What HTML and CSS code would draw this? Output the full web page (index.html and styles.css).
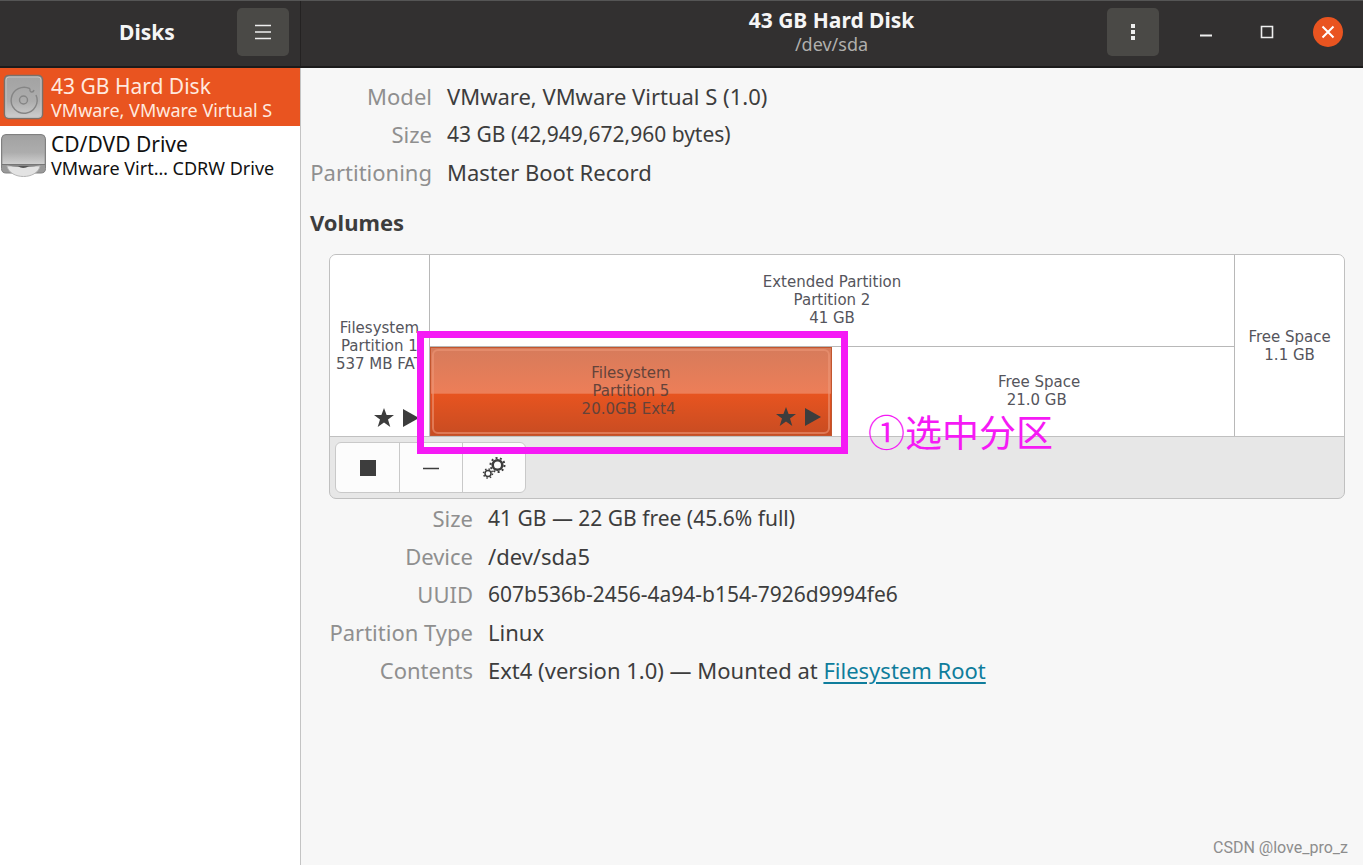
FILE: index.html
```html
<!DOCTYPE html>
<html lang="en">
<head>
<meta charset="utf-8">
<title>Disks</title>
<link rel="stylesheet" href="styles.css">
</head>
<body>
<svg class="defs" aria-hidden="true">
  <symbol id="star" viewBox="0 0 22 22"><path d="M11 1l2.6 7H21l-6 4.600 2.300 7.400-6.300-4.400L4.700 20 7 12.600 1 8h7.400z"/></symbol>
  <symbol id="play" viewBox="0 0 18 20"><path d="M1 1v18L17 10z"/></symbol>
</svg>
<div class="window">
  <header class="titlebar">
    <div class="side-head">
      <h1 class="app-title">Disks</h1>
      <button class="head-btn" aria-label="Menu"><svg width="16" height="16" viewBox="0 0 16 16"><path d="M0 1.500h16M0 8h16M0 14.500h16" stroke="#eee" stroke-width="1.500"/></svg></button>
    </div>
    <div class="main-head">
      <div class="heading">
        <h2 class="disk-title">43 GB Hard Disk</h2>
        <p class="disk-path">/dev/sda</p>
      </div>
      <div class="controls">
        <button class="head-btn" aria-label="Drive options"><svg width="4" height="16" viewBox="0 0 4 16" fill="#eee"><path d="M0 0h4v4H0zM0 6h4v4H0zM0 12h4v4H0z"/></svg></button>
        <button class="win-btn" aria-label="Minimize"><svg width="14" height="14" viewBox="0 0 14 14"><path d="M1 10.500h12" stroke="#eee" stroke-width="2"/></svg></button>
        <button class="win-btn" aria-label="Maximize"><svg width="14" height="14" viewBox="0 0 14 14"><path d="M1.500 1.500h11v11h-11z" fill="none" stroke="#eee" stroke-width="1.600"/></svg></button>
        <button class="win-btn close" aria-label="Close"><svg width="14" height="14" viewBox="0 0 14 14"><path d="M1.500 1.500l11 11M12.500 1.500l-11 11" stroke="#fff" stroke-width="2"/></svg></button>
      </div>
    </div>
  </header>
  <div class="body">
    <nav class="drives">
      <button class="drive selected">
        <svg class="drive-icon" viewBox="0 0 47 48">
          <defs><linearGradient id="metal" x2="0" y2="1"><stop offset="0" stop-color="#a2a2a2"/><stop offset=".6" stop-color="#adadad"/><stop offset="1" stop-color="#cfcfcf"/></linearGradient></defs>
          <rect x="4.500" y="2.500" width="38" height="43" rx="4" fill="url(#metal)" stroke="#7b7069" stroke-width="1.500"/>
          <rect x="6" y="4" width="35" height="40" rx="3" fill="none" stroke="#c4c4c4"/>
          <path d="M30 15.700A13 13 0 1 0 36 22M30 15.700q-.5 3 1.500 3.300t2.500-2" fill="none" stroke="#858585" stroke-width="1.400"/>
          <circle cx="23.500" cy="27" r="4" fill="none" stroke="#858585" stroke-width="1.400"/>
        </svg>
        <span class="drive-text"><span class="drive-name">43 GB Hard Disk</span><span class="drive-model">VMware, VMware Virtual S</span></span>
      </button>
      <button class="drive">
        <svg class="drive-icon" viewBox="0 0 47 48">
          <path d="M6 3.500h35q4 0 4.500 4v30q0 4.500-4.500 4.500H6q-4.500 0-4.500-4.500v-30q.5-4 4.500-4z" fill="#999" stroke="#808080"/>
          <path d="M6 4.500h35q3.500 0 3.500 4V33h-42V8.500q0-4 3.500-4z" fill="url(#metal)"/>
          <path d="M2 33.500h43" stroke="#777"/>
          <path d="M7 35h33C37 49 10 49 7 35z" fill="#e3e3e3" stroke="#b5b5b5"/>
          <path d="M7 34h33l-6 1.500q-10 1.500-21 0z" fill="#888"/>
          <path d="M18 35q5 4 11 0z" fill="#555"/>
        </svg>
        <span class="drive-text"><span class="drive-name">CD/DVD Drive</span><span class="drive-model">VMware Virt… CDRW Drive</span></span>
      </button>
    </nav>
    <main class="details">
      <dl class="facts drive-facts">
        <dt>Model</dt><dd>VMware, VMware Virtual S (1.0)</dd>
        <dt>Size</dt><dd class="digits">43 GB (42,949,672,960 bytes)</dd>
        <dt>Partitioning</dt><dd>Master Boot Record</dd>
      </dl>
      <h3 class="volumes-title">Volumes</h3>
      <section class="volumes">
        <div class="map">
          <div class="part first">
            <p>Filesystem<br>Partition 1<br>537 MB FAT</p>
            <span class="marks"><svg class="star"><use href="#star"/></svg><svg class="play"><use href="#play"/></svg></span>
          </div>
          <div class="extended">
            <div class="part"><p>Extended Partition<br>Partition 2<br>41 GB</p></div>
            <div class="logical">
              <div class="part active">
                <p>Filesystem<br>Partition 5<br>20.0GB Ext4&nbsp;</p>
                <span class="marks"><svg class="star"><use href="#star"/></svg><svg class="play"><use href="#play"/></svg></span>
                <span class="highlight"></span>
              </div>
              <div class="part free"><p>Free Space<br>21.0 GB&nbsp;</p><span class="note">①选中分区</span></div>
            </div>
          </div>
          <div class="part last"><p>Free Space<br>1.1 GB</p></div>
        </div>
        <div class="toolbar">
          <div class="tools">
            <button class="tool" aria-label="Unmount"><svg width="16" height="16"><path d="M0 0h16v16H0z" fill="#3d3d3d"/></svg></button>
            <button class="tool" aria-label="Delete partition"><svg width="16" height="16"><path d="M0 8.500h16" stroke="#3d3d3d" stroke-width="1.500"/></svg></button>
            <button class="tool" aria-label="Partition options"><svg width="24" height="24" viewBox="0 0 24 24" fill="none" stroke="#3d3d3d"><circle cx="15.500" cy="9" r="4.800" stroke-width="2.600"/><circle cx="15.500" cy="9" r="7" stroke-width="2" stroke-dasharray="2 2.400"/><circle cx="6" cy="17.500" r="3" stroke-width="1.500"/><circle cx="6" cy="17.500" r="4.500" stroke-width="1.500" stroke-dasharray="1.500 2.030"/></svg></button>
          </div>
        </div>
      </section>
      <dl class="facts volume-facts">
        <dt>Size</dt><dd class="digits">41 GB — 22 GB free (45.6% full)</dd>
        <dt>Device</dt><dd>/dev/sda5</dd>
        <dt>UUID</dt><dd class="digits">607b536b-2456-4a94-b154-7926d9994fe6</dd>
        <dt>Partition Type</dt><dd>Linux</dd>
        <dt>Contents</dt><dd>Ext4 (version 1.0) — Mounted at <a href="#root">Filesystem Root</a></dd>
      </dl>
      <footer class="credit">CSDN @love_pro_z</footer>
    </main>
  </div>
</div>
</body>
</html>
```
FILE: styles.css
```css
* { box-sizing: border-box; }
body, h1, h2, h3, p, dl, dd { margin: 0; }
body { font-family: "Noto Sans", "Open Sans", sans-serif; font-size: 22px; color: #3d3d3d; background: #f7f7f7; }
button { font: inherit; border: 0; padding: 0; }
.defs { position: absolute; width: 0; height: 0; }
.window { min-height: 100vh; display: flex; flex-direction: column; }

.titlebar { display: grid; grid-template-columns: 301px 1fr; height: 68px; background: #323030; border-top: 1px solid #555; border-bottom: 2px solid #1c1b1b; color: #f5f5f5; }
.side-head { display: grid; grid-template-columns: 1fr 52px; padding: 0 11px 0 57px; align-items: center; border-right: 1px solid #242222; }
.app-title, .disk-title { font-size: 21px; line-height: 24px; font-weight: 700; text-align: center; }
.head-btn { width: 52px; height: 48px; border-radius: 5px; background: #4a4946; display: flex; align-items: center; justify-content: center; }
.side-head, .main-head { padding-bottom: 3px; }
.main-head { display: grid; grid-template-columns: 1fr auto; align-items: center; padding-right: 20px; }
.heading { text-align: center; padding-left: 255px; }
.disk-path { font-size: 18px; line-height: 24px; color: #b0afad; }
.controls { display: flex; align-items: center; }
.controls .head-btn { margin-right: 32px; }
.win-btn { width: 30px; height: 30px; margin-left: 31px; border-radius: 50%; background: none; display: flex; align-items: center; justify-content: center; }
.head-btn + .win-btn { margin-left: 0; }
.win-btn.close { background: #e95420; }

.body { flex: 1; display: grid; grid-template-columns: 301px 1fr; }
.drives { background: #fff; border-right: 1px solid #c4c4c4; }
.drive { display: flex; align-items: center; gap: 4px; width: 100%; height: 58px; background: none; text-align: left; color: #111; }
.drive.selected { background: #e95420; color: #ffe9df; }
.drive-icon { width: 47px; height: 48px; flex: none; }
.drive-text { display: flex; flex-direction: column; white-space: nowrap; padding-top: 2px; }
.drive-name { font-size: 21px; line-height: 24px; }
.drive-model { font-size: 18px; line-height: 24px; }

.details { display: flex; flex-direction: column; padding: 9px 18px 0 9px; }
.facts { display: grid; column-gap: 15px; line-height: 38px; white-space: nowrap; }
.facts dt { color: #8f8f8f; text-align: right; }
.facts .digits { font-size: 21px; }
.drive-facts { grid-template-columns: 122px 1fr; }
.volume-facts { grid-template-columns: 163px 1fr; }
.facts a { color: #0f7d9c; text-underline-offset: 3px; text-decoration-thickness: 2px; }
.volumes-title { font-size: 22px; line-height: 30px; margin: 16px 0 17px; }

.volumes { margin-left: 19px; border: 1px solid #c0c0c0; border-radius: 7px; background: #e7e7e7; }
.map { display: flex; height: 182px; border-bottom: 1px solid #c0c0c0; background: #fff; border-radius: 6px 6px 0 0; font: 15px/18px "DejaVu Sans", sans-serif; text-align: center; color: #55555c; }
.part { display: flex; align-items: center; justify-content: center; position: relative; flex: 1; white-space: nowrap; }
.first { flex: 99 1 0; }
.extended { flex: 806 1 0; display: grid; grid-template-rows: 1fr 1fr; border: solid #b8b8b8; border-width: 0 1px; }
.last { flex: 109 1 0; }
.logical { display: grid; grid-template-columns: 1fr 1fr; border-top: 1px solid #b8b8b8; }
.free { padding-left: 12px; }
.active { color: #64433a; background: linear-gradient(#d67b5b, #ed7e58 52%, #e75420 53%, #c84c22); border: 1px solid #c2562f; }
.active::before { content: ""; position: absolute; inset: 1px; border: 2px solid #ed967699; border-radius: 6px; }
.marks { position: absolute; right: 9px; bottom: 7px; display: flex; align-items: center; gap: 7px; }
.star { width: 22px; height: 22px; fill: #3d3d3d; }
.play { width: 18px; height: 20px; fill: #3d3d3d; }
.highlight { position: absolute; z-index: 2; inset: -17px -17px -19px -14px; border: 7px solid #f51af5; }
.note { position: absolute; left: 36px; bottom: -14px; font: 37px/38px "Noto Sans CJK SC", sans-serif; color: #f51af5; }
.toolbar { padding: 5px; }
.tools { display: inline-flex; vertical-align: top; border: 1px solid #c9c9c9; border-radius: 6px; background: #fcfcfc; }
.tool { width: 63px; height: 49px; background: none; display: flex; align-items: center; justify-content: center; }
.tool + .tool { border-left: 1px solid #c9c9c9; }
.credit { margin-top: auto; margin-right: -3px; padding-bottom: 8px; text-align: right; font: 16px/18px Roboto, sans-serif; color: #8d8d8d; }
```
